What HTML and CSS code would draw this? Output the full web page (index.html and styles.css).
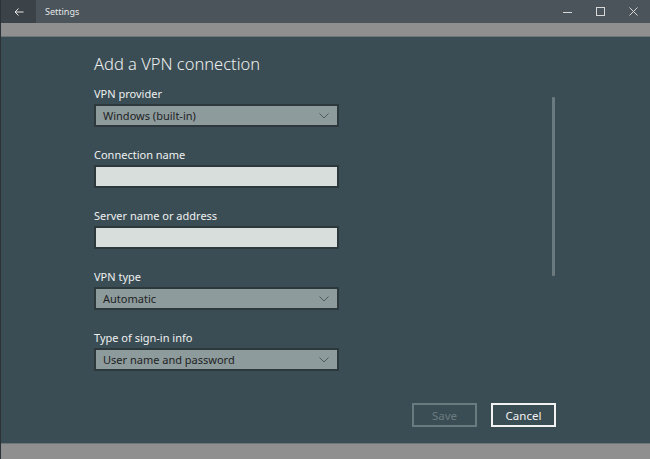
FILE: index.html
```html
<!DOCTYPE html>
<html lang="en">
<head>
    <meta charset="UTF-8">
    <meta name="viewport" content="width=device-width, initial-scale=1.0">
    <title>Settings</title>
    <link rel="stylesheet" href="styles.css">
</head>
<body>
    <div class="window">
        <header class="titlebar">
            <div class="back">
                <svg width="10" height="10" viewBox="0 0 10 10"><path d="M9.5 5H1M4.5 1.5L1 5l3.5 3.5" fill="none" stroke="#e8e8e8" stroke-width="1"/></svg>
            </div>
            <span class="title">Settings</span>
            <div class="controls">
                <span class="ctl"><svg width="10" height="10" viewBox="0 0 10 10"><path d="M0 5.5h9" stroke="#d8d8d8" stroke-width="1"/></svg></span>
                <span class="ctl"><svg width="10" height="10" viewBox="0 0 10 10"><rect x="0.5" y="0.5" width="8" height="8" fill="none" stroke="#d8d8d8" stroke-width="1"/></svg></span>
                <span class="ctl"><svg width="10" height="10" viewBox="0 0 10 10"><path d="M0.5 0.5l8 8M8.5 0.5l-8 8" stroke="#d8d8d8" stroke-width="1"/></svg></span>
            </div>
        </header>
        <div class="band"></div>

        <section class="main">
            <div class="content">
                <h1>Add a VPN connection</h1>
                <div class="fields">
                    <div class="field">
                        <label>VPN provider</label>
                        <div class="select"><span>Windows (built-in)</span><svg class="chev" width="10" height="6" viewBox="0 0 10 6"><path d="M0.5 0.5L5 5l4.5-4.5" fill="none" stroke="#4e5b5e" stroke-width="1"/></svg></div>
                    </div>
                    <div class="field">
                        <label>Connection name</label>
                        <div class="input"></div>
                    </div>
                    <div class="field">
                        <label>Server name or address</label>
                        <div class="input"></div>
                    </div>
                    <div class="field">
                        <label>VPN type</label>
                        <div class="select"><span>Automatic</span><svg class="chev" width="10" height="6" viewBox="0 0 10 6"><path d="M0.5 0.5L5 5l4.5-4.5" fill="none" stroke="#4e5b5e" stroke-width="1"/></svg></div>
                    </div>
                    <div class="field">
                        <label>Type of sign-in info</label>
                        <div class="select"><span>User name and password</span><svg class="chev" width="10" height="6" viewBox="0 0 10 6"><path d="M0.5 0.5L5 5l4.5-4.5" fill="none" stroke="#4e5b5e" stroke-width="1"/></svg></div>
                    </div>
                </div>
                <div class="actions">
                    <button class="btn disabled">Save</button>
                    <button class="btn">Cancel</button>
                </div>
            </div>
            <div class="scrollbar"></div>
        </section>

        <div class="band bottom"></div>
    </div>
</body>
</html>
```

FILE: styles.css
```css
body {
    margin: 0;
    padding: 0;
    font-family: "Noto Sans", "Open Sans", sans-serif;
    background: #3b4d54;
}
.window {
    width: 650px;
    height: 459px;
    display: flex;
    flex-direction: column;
    overflow: hidden;
    border-left: 1px solid #2c3337;
    box-sizing: border-box;
}
.titlebar {
    height: 23px;
    background: #4b545b;
    display: flex;
    align-items: center;
    flex-shrink: 0;
}
.back {
    width: 35px;
    height: 23px;
    background: #3b4348;
    display: flex;
    align-items: center;
    justify-content: center;
}
.title {
    color: #e4e6e7;
    font-size: 9px;
    margin-left: 9px;
}
.controls {
    margin-left: auto;
    display: flex;
}
.ctl {
    width: 33px;
    height: 23px;
    display: flex;
    align-items: center;
    justify-content: center;
}
.band {
    height: 13px;
    background: #8f8f8f;
    border-bottom: 1px solid #6f7477;
    flex-shrink: 0;
}
.band.bottom {
    height: 15px;
    border-bottom: none;
    border-top: 1px solid #6f7477;
}
.main {
    flex: 1;
    position: relative;
    padding: 15px 0 0 93px;
}
.content {
    width: 462px;
}
.main h1 {
    margin: 0 0 10px 0;
    font-size: 16.5px;
    font-weight: 300;
    line-height: 24px;
    color: #eceeee;
}
.fields {
    width: 245px;
}
.field {
    margin-bottom: 20px;
}
.field label {
    display: block;
    font-size: 11px;
    line-height: 15px;
    color: #eef0f0;
    margin-bottom: 3px;
}
.select, .input {
    height: 23px;
    box-sizing: border-box;
    border: 2px solid #2c383c;
}
.select {
    background: #8e9b9c;
    display: flex;
    align-items: center;
    padding: 0 8px 0 7px;
    font-size: 11px;
    color: #1d2324;
}
.select .chev {
    margin-left: auto;
}
.input {
    background: #d7dedc;
}
.actions {
    display: flex;
    justify-content: flex-end;
    gap: 14px;
    margin-top: 32px;
}
.btn {
    width: 65px;
    height: 24px;
    background: transparent;
    border: 2px solid #f2f2f2;
    color: #f2f2f2;
    font-family: inherit;
    font-size: 11.5px;
    padding: 0;
}
.btn.disabled {
    border-color: #6a7b80;
    color: #6a7b80;
}
.scrollbar {
    position: absolute;
    left: 551px;
    top: 60px;
    width: 3px;
    height: 179px;
    background: #6b7a7f;
    border-radius: 1px;
}
```
